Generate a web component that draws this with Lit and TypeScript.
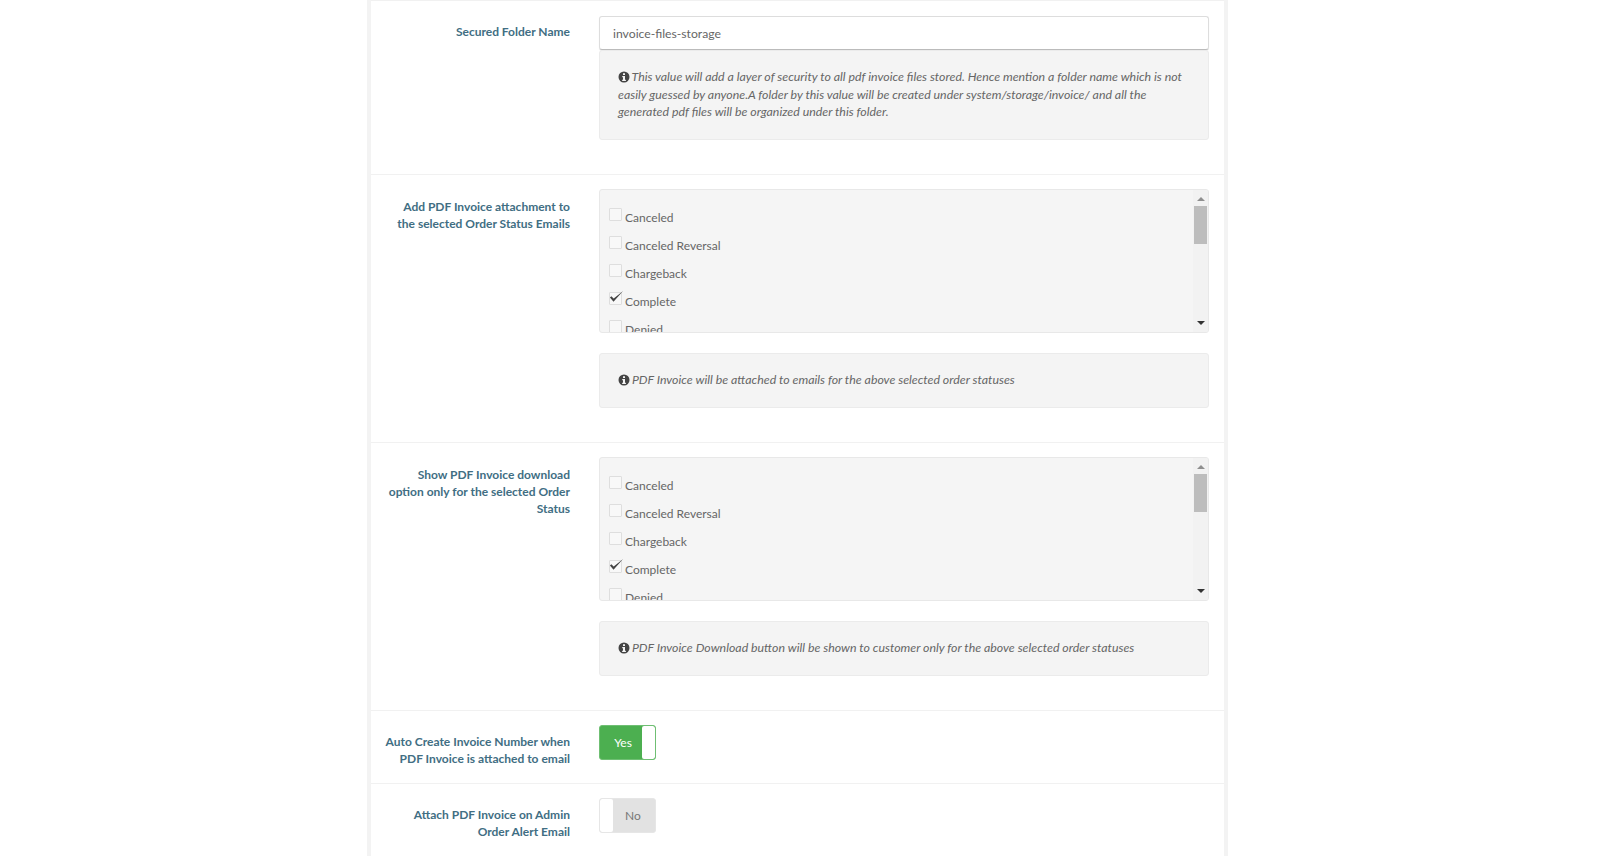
import { LitElement, html, css, svg } from "lit";
import { customElement } from "lit/decorators.js";

const STATUSES = [
  ["Canceled", false],
  ["Canceled Reversal", false],
  ["Chargeback", false],
  ["Complete", true],
  ["Denied", false],
] as [string, boolean][];

const infoIcon = html`<svg class="info" viewBox="0 0 24 24" aria-hidden="true"><path fill-rule="evenodd" d="M12 1a11 11 0 1 0 0 22 11 11 0 0 0 0-22ZM10 4.500h4v3.600h-4ZM8.500 10h5.500v7.500h1.800v2.500H8.300v-2.500H10V12.500H8.500Z"/></svg>`;
const check = svg`<path d="M1 8 4.800 12.500 15 1 5 9.200 2.500 6.800Z"/>`;

@customElement("app-root")
export class AppRoot extends LitElement {
  static styles = css`
    :host { display: block; background: #fff; height: 856px; overflow: hidden; font-family: Lato, "Liberation Sans", sans-serif; font-size: 12px; color: #666; }
    .panel { width: 853px; margin-left: 367px; border-left: 4px solid #f3f3f3; border-right: 4px solid #f3f3f3; box-sizing: content-box; }
    .row { display: grid; grid-template-columns: 214px 1fr; border-top: 1px solid #f1f1f1; padding: 14px 15px 14px 0; box-sizing: border-box; }
    .row.first { padding-top: 15px; }
    .row.toggle-row { padding-bottom: 15px; }
    .label { text-align: right; padding: 9px 15px 0 13px; font-weight: 700; color: #416e83; line-height: 17.200px; box-sizing: border-box; }
    .first .label { padding-top: 7px; }
    .toggle-row .label { padding-top: 8px; min-height: 43px; }
    .field { padding-left: 14px; display: flex; flex-direction: column; min-width: 0; }
    .input { height: 34px; box-sizing: border-box; border: 1px solid #ddd; border-bottom-color: #bbb; border-radius: 3px; background: #fff; padding: 0 13px; font-size: 12.200px; line-height: 33px; color: #666; box-shadow: 0 1px 1px rgba(0,0,0,.08); }
    .help { margin-bottom: 20px; height: 90px; box-sizing: border-box; padding: 17px 18px 0; background: #f4f4f4; border: 1px solid #ebebeb; border-radius: 3px; font-style: italic; font-size: 12.350px; line-height: 17.500px; color: #666; }
    .info { width: 12px; height: 12px; fill: #444; vertical-align: -1.500px; margin-right: -1px; }
    .select { height: 144px; box-sizing: border-box; background: #f5f5f5; border: 1px solid #e8e8e8; border-radius: 3px; display: flex; overflow: hidden; }
    .items { flex: 1; padding: 19px 9px 0; overflow: hidden; display: flex; flex-direction: column; }
    .item { height: 28px; flex: none; display: flex; align-items: flex-start; gap: 3px; line-height: 16px; color: #666; }
    .box { width: 13px; height: 13px; box-sizing: border-box; margin-top: -1px; flex: none; background: #f8f8f8; border: 1px solid #dedede; border-radius: 1px; position: relative; }
    .box svg { position: absolute; left: -1px; top: -4px; width: 15px; height: 15px; fill: #444; }
    .text { margin-top: 1px; }
    .scroll { width: 15px; flex: none; background: #f2f2f2; display: flex; flex-direction: column; align-items: center; padding-top: 7px; box-sizing: border-box; }
    .up { width: 0; height: 0; border: 4px solid transparent; border-top: 0; border-bottom: 4px solid #8f8f8f; }
    .thumb { width: 13px; height: 38px; background: #bdbdbd; margin-top: 5px; flex: none; }
    .down { width: 0; height: 0; border: 4px solid transparent; border-bottom: 0; border-top: 4px solid #333; margin-top: auto; margin-bottom: 7px; }
    .list .help { margin-top: 20px; padding: 0 18px; height: 55px; line-height: 52px; }
    .toggle { width: 57px; height: 35px; box-sizing: border-box; border-radius: 3px; display: flex; overflow: hidden; font-size: 12px; }
    .on { background: #4caf50; border: 1px solid #6fbf73; color: #fff; }
    .on .face { padding-left: 4px; }
    .off { background: #e2e2e2; border: 1px solid #e6e6e6; color: #777; }
    .off .face { padding-right: 2px; }
    .face { flex: 1; display: flex; align-items: center; justify-content: center; }
    .knob { width: 13px; background: #fff; flex: none; border-radius: 2px; }
  `;

  private list() {
    return html`<div class="select">
      <div class="items">
        ${STATUSES.map(([name, on]) => html`<div class="item"><span class="box">${on ? html`<svg viewBox="0 0 16 14">${check}</svg>` : ""}</span><span class="text">${name}</span></div>`)}
      </div>
      <div class="scroll"><div class="up"></div><div class="thumb"></div><div class="down"></div></div>
    </div>`;
  }

  render() {
    return html`<div class="panel">
      <div class="row first">
        <div class="label">Secured Folder Name</div>
        <div class="field">
          <div class="input">invoice-files-storage</div>
          <div class="help">${infoIcon} This value will add a layer of security to all pdf invoice files stored. Hence mention a folder name which is not easily guessed by anyone.A folder by this value will be created under system/storage/invoice/ and all the generated pdf files will be organized under this folder.</div>
        </div>
      </div>
      <div class="row list">
        <div class="label">Add PDF Invoice attachment to the selected Order Status Emails</div>
        <div class="field">
          ${this.list()}
          <div class="help">${infoIcon} PDF Invoice will be attached to emails for the above selected order statuses</div>
        </div>
      </div>
      <div class="row list">
        <div class="label">Show PDF Invoice download option only for the selected Order Status</div>
        <div class="field">
          ${this.list()}
          <div class="help">${infoIcon} PDF Invoice Download button will be shown to customer only for the above selected order statuses</div>
        </div>
      </div>
      <div class="row toggle-row">
        <div class="label">Auto Create Invoice Number when PDF Invoice is attached to email</div>
        <div class="field"><div class="toggle on"><div class="face">Yes</div><div class="knob"></div></div></div>
      </div>
      <div class="row toggle-row">
        <div class="label">Attach PDF Invoice on Admin Order Alert Email</div>
        <div class="field"><div class="toggle off"><div class="knob"></div><div class="face">No</div></div></div>
      </div>
    </div>`;
  }
}
